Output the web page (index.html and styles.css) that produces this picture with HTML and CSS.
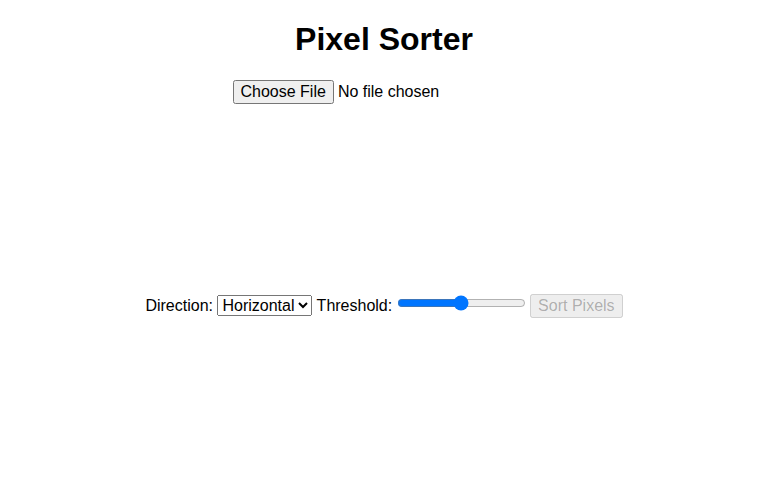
FILE: index.html
```html
<!DOCTYPE html>
<html lang="en">
<head>
<meta charset="utf-8">
<title>Pixel Sorter</title>
<link rel="stylesheet" href="styles.css">
</head>
<body>
<h1 class="title">Pixel Sorter</h1>
<div class="upload">
  <input type="file" class="file-input" accept="image/*">
</div>
<canvas class="canvas" width="300" height="150"></canvas>
<div class="controls">
  <label for="direction">Direction:</label>
  <select id="direction" class="select">
    <option>Horizontal</option>
    <option>Vertical</option>
  </select>
  <label for="threshold">Threshold:</label>
  <input id="threshold" type="range" class="range" min="0" max="255" value="128">
  <button class="sort-btn" disabled>Sort Pixels</button>
</div>
</body>
</html>
```
FILE: styles.css
```css
body {
  margin: 0;
  font-family: "Liberation Sans", Arial, sans-serif;
  text-align: center;
  color: #000;
  background: #fff;
}
.title {
  font-size: 32px;
  font-weight: bold;
  margin: 21px 0 22px;
}
.upload {
  font-size: 16px;
}
.file-input,
.select,
.sort-btn {
  font-family: "Liberation Sans", Arial, sans-serif;
  font-size: 16px;
}
.canvas {
  display: block;
  margin: 20px auto;
  width: 300px;
  height: 150px;
}
.controls {
  font-size: 16px;
}
.range {
  margin: 0;
}
```
